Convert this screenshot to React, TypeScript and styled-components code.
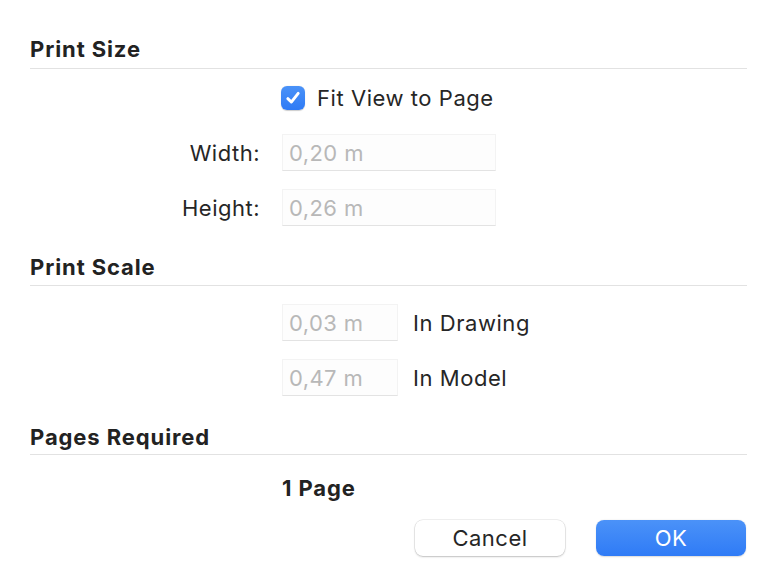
import React from "react";
import styled, { createGlobalStyle } from "styled-components";

const Global = createGlobalStyle`
  html, body { margin: 0; padding: 0; background: #ffffff; }
  body { font-family: Inter, "Noto Sans", sans-serif; color: #262626; -webkit-font-smoothing: antialiased; }
`;

const Page = styled.div`
  width: 768px;
  height: 573px;
  box-sizing: border-box;
  padding: 36px 21px 0 30px;
  display: flex;
  flex-direction: column;
  background: #fff;
  overflow: hidden;
`;

const Section = styled.section<{ $first?: boolean }>`
  display: flex;
  flex-direction: column;
  margin-top: ${(p) => (p.$first ? "0" : "28px")};
`;

const Header = styled.h2<{ $pad?: number }>`
  margin: 0;
  font-size: 22px;
  line-height: 26px;
  font-weight: 700;
  color: #222;
  padding-bottom: ${(p) => p.$pad ?? 5}px;
  border-bottom: 1px solid #e2e2e2;
  letter-spacing: 0.9px;
`;

const Body = styled.div<{ $top: number }>`
  display: grid;
  grid-template-columns: 230px 1fr;
  column-gap: 22px;
  row-gap: 18px;
  padding-top: ${(p) => p.$top}px;
  align-items: center;
`;

const Label = styled.span`
  grid-column: 1;
  text-align: right;
  font-size: 22px;
  letter-spacing: 0.5px;
  color: #262626;
`;

const Control = styled.div<{ $h?: number }>`
  grid-column: 2;
  display: flex;
  align-items: center;
  gap: 15px;
  min-height: ${(p) => p.$h ?? 36}px;
`;

const Field = styled.div<{ $w: number }>`
  width: ${(p) => p.$w}px;
  height: 37px;
  box-sizing: border-box;
  padding: 0 6px;
  display: flex;
  align-items: center;
  background: #fdfdfd;
  border: 1px solid #f3f3f3;
  border-bottom: 1px solid #e3e3e3;
  font-size: 22px;
  letter-spacing: 0.4px;
  color: #b8b8b8;
`;

const Text = styled.span<{ $bold?: boolean }>`
  font-size: 22px;
  line-height: 26px;
  letter-spacing: ${(p) => (p.$bold ? "0.9px" : "0.55px")};
  font-weight: ${(p) => (p.$bold ? 700 : 400)};
  color: ${(p) => (p.$bold ? "#222" : "#262626")};
`;

const CheckBox = styled.span`
  width: 24px;
  height: 24px;
  border-radius: 6px;
  background: linear-gradient(#4a92f8, #2e7af5);
  box-shadow: 0 0.5px 1px rgba(0, 0, 0, 0.2);
  display: inline-flex;
  align-items: center;
  justify-content: center;
  margin-left: -1px;
  margin-right: -3px;
`;

const Footer = styled.div`
  display: flex;
  justify-content: flex-end;
  gap: 31px;
  margin-top: 19px;
  padding-right: 1px;
`;

const Button = styled.button<{ $primary?: boolean }>`
  width: 150px;
  height: 36px;
  border-radius: 8px;
  border: none;
  font-family: Inter, "Noto Sans", sans-serif;
  font-size: 22px;
  letter-spacing: 0.5px;
  color: ${(p) => (p.$primary ? "#fff" : "#262626")};
  background: ${(p) => (p.$primary ? "linear-gradient(#4b92f8, #2f7bf6)" : "#fff")};
  box-shadow: ${(p) =>
    p.$primary
      ? "0 0.5px 1.5px rgba(0,0,0,0.15)"
      : "0 0 0 0.5px rgba(0,0,0,0.12), 0 1px 2px rgba(0,0,0,0.2)"};
  padding: 0;
`;

export default function App() {
  return (
    <>
      <Global />
      <Page>
        <Section $first>
          <Header $pad={6}>Print Size</Header>
          <Body $top={11}>
            <Control>
              <CheckBox>
                <svg width="18" height="18" viewBox="0 0 16 16">
                  <path d="M3.4 8.6 L6.5 11.6 L12.6 3.9" fill="none" stroke="#fff" strokeWidth="2.6" strokeLinecap="round" strokeLinejoin="round" />
                </svg>
              </CheckBox>
              <Text>Fit View to Page</Text>
            </Control>
            <Label>Width:</Label>
            <Control>
              <Field $w={214}>0,20 m</Field>
            </Control>
            <Label>Height:</Label>
            <Control>
              <Field $w={214}>0,26 m</Field>
            </Control>
          </Body>
        </Section>
        <Section>
          <Header>Print Scale</Header>
          <Body $top={18}>
            <Control>
              <Field $w={116}>0,03 m</Field>
              <Text>In Drawing</Text>
            </Control>
            <Control>
              <Field $w={116}>0,47 m</Field>
              <Text>In Model</Text>
            </Control>
          </Body>
        </Section>
        <Section>
          <Header $pad={4}>Pages Required</Header>
          <Body $top={20}>
            <Control $h={26}>
              <Text $bold>1 Page</Text>
            </Control>
          </Body>
        </Section>
        <Footer>
          <Button>Cancel</Button>
          <Button $primary>OK</Button>
        </Footer>
      </Page>
    </>
  );
}
